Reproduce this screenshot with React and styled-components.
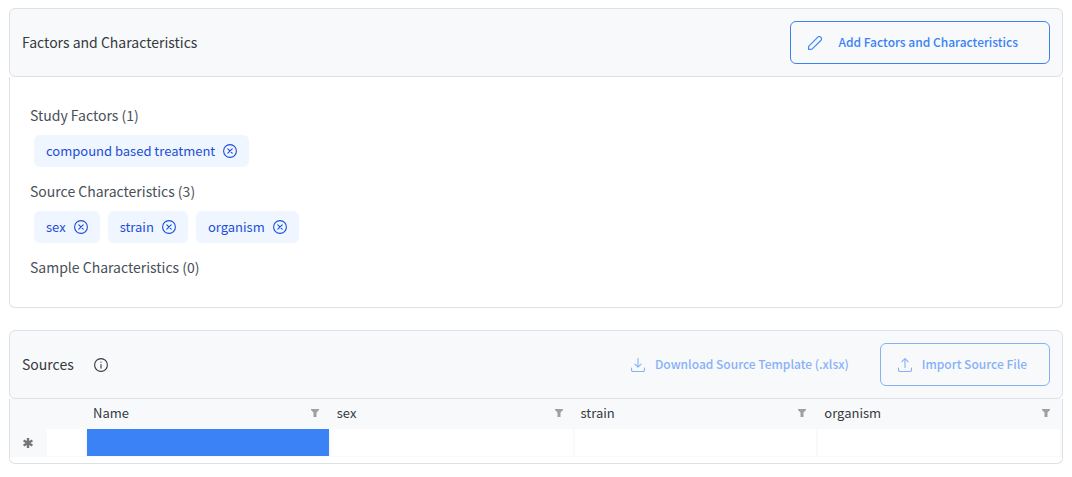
import React, { useState } from "react";
import styled, { createGlobalStyle } from "styled-components";

const GlobalStyle = createGlobalStyle`
  * {
    box-sizing: border-box;
  }

  body {
    margin: 0;
    background: #ffffff;
    font-family: "Noto Sans CJK SC", "Noto Sans", sans-serif;
    font-size: 14px;
    color: #495057;
  }
`;

const Page = styled.main`
  display: flex;
  flex-direction: column;
  gap: 22px;
  padding: 8px 9px;
`;

const PanelHeader = styled.header`
  display: flex;
  align-items: center;
  justify-content: space-between;
  padding: 12px;
  border: 1px solid #dee2e6;
  border-radius: 6px;
  background: #f8f9fb;
`;

const Title = styled.h2`
  display: flex;
  align-items: center;
  gap: 20px;
  margin: 0;
  font-size: 14px;
  font-weight: 400;
  line-height: 20px;
  color: #343a40;
`;

const Label = styled.span`
  padding-bottom: 2px;
`;

const PanelBody = styled.div`
  padding: ${(props) => (props.$flush ? "0 0 6px" : "28px 20px 30px")};
  border: 1px solid #dee2e6;
  border-top: none;
  border-radius: 0 0 6px 6px;
  background: #ffffff;
`;

const Actions = styled.div`
  display: flex;
  gap: 8px;
`;

const Button = styled.button`
  display: flex;
  align-items: center;
  gap: ${(props) => (props.$wide ? "17px" : "10px")};
  height: 43px;
  padding: ${(props) => (props.$wide ? "0 31px 0 17px" : "0 22px 0 17px")};
  border: 1px solid ${(props) => (props.$text ? "transparent" : "#3b82f6")};
  border-radius: 6px;
  background: transparent;
  color: #3b82f6;
  font-family: inherit;
  font-size: 12px;
  font-weight: 500;
  cursor: pointer;

  &:disabled {
    opacity: 0.6;
    cursor: default;
  }
`;

const Group = styled.section`
  display: flex;
  flex-direction: column;
  gap: 10px;
  margin-bottom: 14px;

  &:last-child {
    margin-bottom: 0;
  }
`;

const GroupTitle = styled.h3`
  margin: 0;
  font-size: 14px;
  font-weight: 400;
  line-height: 20px;
`;

const ChipList = styled.div`
  display: flex;
  flex-wrap: wrap;
  gap: 8px;
  padding-left: 4px;
`;

const Chip = styled.span`
  display: flex;
  align-items: center;
  gap: 8px;
  height: 32px;
  padding: 0 12px;
  border-radius: 6px;
  background: #eff6ff;
  color: #1d4ed8;
  font-size: 13px;
`;

const IconButton = styled.button`
  display: flex;
  padding: 0;
  border: none;
  background: none;
  color: inherit;
  cursor: pointer;
`;

const Grid = styled.table`
  width: 100%;
  table-layout: fixed;
  border-collapse: separate;
  border-spacing: 0;
`;

const HeadCell = styled.th`
  width: ${(props) => props.$width || "auto"};
  height: 30px;
  padding: 0 12px 2px 6px;
  background: #f8f9fb;
  color: #343a40;
  font-size: 13px;
  font-weight: 400;
  line-height: 20px;
  text-align: left;
`;

const HeadContent = styled.div`
  display: flex;
  align-items: center;
  justify-content: space-between;
`;

const Cell = styled.td`
  height: 28px;
  padding: 0;
  border-right: 2px solid #f8f9fb;
  border-bottom: 1px solid #f8f9fb;
  background: ${(props) => (props.$selected ? "#3b82f6" : "#ffffff")};
  background-clip: padding-box;
`;

const RowMarker = styled.th`
  padding: 0 2px 2px 0;
  background: #f8f9fb;
  color: #757575;
  line-height: 20px;
  text-align: center;
`;

const Svg = ({ children }) => (
  <svg
    width="14"
    height="14"
    viewBox="0 0 14 14"
    fill="none"
    stroke="currentColor"
    strokeWidth="1.100"
    strokeLinecap="round"
    strokeLinejoin="round"
    aria-hidden="true"
  >
    {children}
  </svg>
);

const PencilIcon = () => (
  <Svg>
    <path d="M.6 13.400V10.300L9.600 1.300a2.300 2.300 0 0 1 3.200 0 2.300 2.300 0 0 1 0 3.200L4 13.200z" />
  </Svg>
);

const TimesCircleIcon = () => (
  <Svg>
    <circle cx="7" cy="7" r="6.400" />
    <path d="M4.800 4.800l4.400 4.400M9.200 4.800L4.800 9.200" />
  </Svg>
);

const InfoIcon = () => (
  <Svg>
    <circle cx="7" cy="7" r="6.400" />
    <path d="M7 6.500v3.600M7 4.100v.1" />
  </Svg>
);

const DownloadIcon = () => (
  <Svg>
    <path d="M7 .5v8.500M3.900 6.200L7 9.200l3.100-3M.5 10v2a1.500 1.500 0 0 0 1.500 1.500h10a1.500 1.500 0 0 0 1.500-1.500V10" />
  </Svg>
);

const UploadIcon = () => (
  <Svg>
    <path d="M7 9.500V.7M3.900 3.600L7 .6l3.100 3M.5 10v2a1.500 1.500 0 0 0 1.500 1.500h10a1.500 1.500 0 0 0 1.500-1.500V10" />
  </Svg>
);

const FilterIcon = () => (
  <svg width="8" height="8" viewBox="0 0 8 8" fill="#a0a0a0" aria-hidden="true">
    <path d="M0 0h8v1L5.500 3.500V8h-3V3.500L0 1z" />
  </svg>
);

const AsteriskIcon = () => (
  <svg width="10" height="10" viewBox="0 0 10 10" stroke="currentColor" strokeWidth="2.400" aria-hidden="true">
    <path d="M5 0v10M.6 2.500l8.800 5M9.400 2.500l-8.800 5" />
  </svg>
);

const columns = ["Name", "sex", "strain", "organism"];

const ChipGroup = ({ title, items, onRemove }) => (
  <Group>
    <GroupTitle>
      {title} ({items.length})
    </GroupTitle>
    {items.length > 0 && (
      <ChipList>
        {items.map((item) => (
          <Chip key={item}>
            <Label>{item}</Label>
            <IconButton aria-label={`Remove ${item}`} onClick={() => onRemove(item)}>
              <TimesCircleIcon />
            </IconButton>
          </Chip>
        ))}
      </ChipList>
    )}
  </Group>
);

const App = () => {
  const [factors, setFactors] = useState(["compound based treatment"]);
  const [sources, setSources] = useState(["sex", "strain", "organism"]);
  const [samples, setSamples] = useState([]);

  const removeFrom = (setter) => (item) => setter((list) => list.filter((i) => i !== item));

  return (
    <Page>
      <GlobalStyle />
      <section>
        <PanelHeader>
          <Title>
            <Label>Factors and Characteristics</Label>
          </Title>
          <Button $wide>
            <PencilIcon />
            <Label>Add Factors and Characteristics</Label>
          </Button>
        </PanelHeader>
        <PanelBody>
          <ChipGroup title="Study Factors" items={factors} onRemove={removeFrom(setFactors)} />
          <ChipGroup title="Source Characteristics" items={sources} onRemove={removeFrom(setSources)} />
          <ChipGroup title="Sample Characteristics" items={samples} onRemove={removeFrom(setSamples)} />
        </PanelBody>
      </section>
      <section>
        <PanelHeader>
          <Title>
            <Label>Sources</Label>
            <IconButton aria-label="About sources">
              <InfoIcon />
            </IconButton>
          </Title>
          <Actions>
            <Button $text disabled>
              <DownloadIcon />
              <Label>Download Source Template (.xlsx)</Label>
            </Button>
            <Button disabled>
              <UploadIcon />
              <Label>Import Source File</Label>
            </Button>
          </Actions>
        </PanelHeader>
        <PanelBody $flush>
          <Grid>
            <thead>
              <tr>
                <HeadCell $width="37px" />
                <HeadCell $width="40px" />
                {columns.map((column) => (
                  <HeadCell key={column} scope="col">
                    <HeadContent>
                      {column}
                      <IconButton aria-label={`Filter ${column}`}>
                        <FilterIcon />
                      </IconButton>
                    </HeadContent>
                  </HeadCell>
                ))}
              </tr>
            </thead>
            <tbody>
              <tr>
                <RowMarker scope="row">
                  <AsteriskIcon />
                </RowMarker>
                <Cell />
                {columns.map((column) => (
                  <Cell key={column} $selected={column === "Name"} />
                ))}
              </tr>
            </tbody>
          </Grid>
        </PanelBody>
      </section>
    </Page>
  );
};

export default App;
